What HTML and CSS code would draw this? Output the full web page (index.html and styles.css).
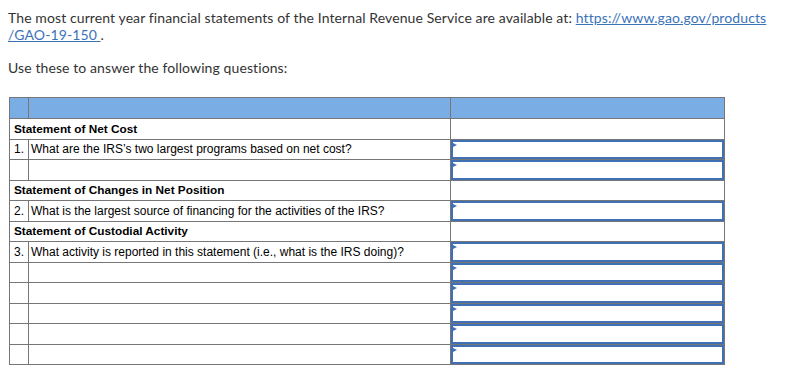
FILE: index.html
```html
<!DOCTYPE html>
<html>
<head>
<meta charset="utf-8">
<link rel="stylesheet" href="styles.css">
</head>
<body>
<div class="page">
  <p class="intro">The most current year financial statements of the Internal Revenue Service are available at: <a class="link" href="#">https://www.gao.gov/products<br>/GAO-19-150&nbsp;</a>.</p>
  <p class="use">Use these to answer the following questions:</p>
  <table class="sheet">
    <colgroup>
      <col class="c-num">
      <col class="c-q">
      <col class="c-ans">
    </colgroup>
    <tr class="head"><td></td><td></td><td></td></tr>
    <tr><td class="title" colspan="2">Statement of Net Cost</td><td></td></tr>
    <tr><td class="num">1.</td><td class="q">What are the IRS’s two largest programs based on net cost?</td><td class="ans"><div class="box"><span class="tri"></span></div></td></tr>
    <tr><td class="num"></td><td class="q"></td><td class="ans"><div class="box"><span class="tri"></span></div></td></tr>
    <tr><td class="title" colspan="2">Statement of Changes in Net Position</td><td></td></tr>
    <tr><td class="num">2.</td><td class="q">What is the largest source of financing for the activities of the IRS?</td><td class="ans"><div class="box"><span class="tri"></span></div></td></tr>
    <tr><td class="title" colspan="2">Statement of Custodial Activity</td><td></td></tr>
    <tr><td class="num">3.</td><td class="q">What activity is reported in this statement (i.e., what is the IRS doing)?</td><td class="ans"><div class="box"><span class="tri"></span></div></td></tr>
    <tr><td class="num"></td><td class="q"></td><td class="ans"><div class="box"><span class="tri"></span></div></td></tr>
    <tr><td class="num"></td><td class="q"></td><td class="ans"><div class="box"><span class="tri"></span></div></td></tr>
    <tr><td class="num"></td><td class="q"></td><td class="ans"><div class="box"><span class="tri"></span></div></td></tr>
    <tr><td class="num"></td><td class="q"></td><td class="ans"><div class="box"><span class="tri"></span></div></td></tr>
    <tr><td class="num"></td><td class="q"></td><td class="ans"><div class="box"><span class="tri"></span></div></td></tr>
  </table>
</div>
</body>
</html>
```
FILE: styles.css
```css
html, body {
  margin: 0;
  padding: 0;
  background: #fff;
}
.page {
  padding: 9px 8px 0 8px;
  font-family: Lato, "Open Sans", sans-serif;
  font-size: 14px;
  letter-spacing: 0.1px;
  font-variant-ligatures: none;
  color: #333;
}
.intro {
  margin: 0;
  line-height: 17px;
}
.link {
  color: #3b73b9;
  text-decoration: underline;
}
.use {
  margin: 16px 0 0 0;
  line-height: 17px;
}
.sheet {
  margin: 21px 0 0 1px;
  border-collapse: collapse;
  table-layout: fixed;
  width: 716px;
  font-family: "Liberation Sans", Arial, sans-serif;
  font-size: 12px;
  letter-spacing: 0;
  color: #000;
}
.c-num { width: 19px; }
.c-q { width: 422px; }
.c-ans { width: 274px; }
.sheet td {
  border: 1px solid #767676;
  height: 19.5px;
  padding: 0;
  vertical-align: middle;
  white-space: nowrap;
}
.sheet tr.head td {
  background: #7aade3;
  height: 20px;
}
.sheet td.title {
  font-weight: bold;
  font-size: 11.8px;
  padding-left: 4px;
}
.sheet td.num {
  padding-left: 4px;
}
.sheet td.q {
  padding-left: 2px;
}
.sheet td.ans {
  padding: 0;
}
.box {
  box-sizing: border-box;
  height: 19.5px;
  border: 2px solid #3f70b6;
  padding-top: 1px;
}
.tri {
  display: block;
  width: 0;
  height: 0;
  border-top: 2.5px solid transparent;
  border-bottom: 2.5px solid transparent;
  border-left: 4px solid #3f70b6;
}
```
